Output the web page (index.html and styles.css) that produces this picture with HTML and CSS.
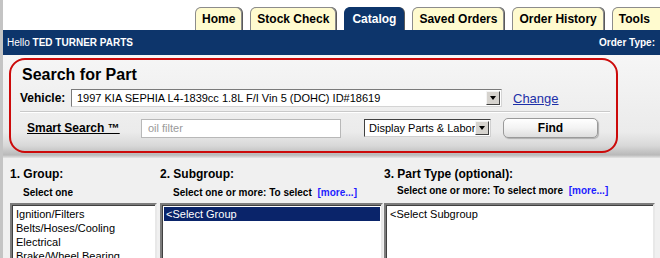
FILE: index.html
```html
<!DOCTYPE html>
<html lang="en">

<head>
    <meta charset="UTF-8">
    <title>Catalog - Search for Part</title>
    <link rel="stylesheet" href="styles.css">
</head>

<body>
    <div class="page">
        <div class="tabs">
            <a class="tab">Home</a>
            <a class="tab">Stock Check</a>
            <a class="tab active">Catalog</a>
            <a class="tab">Saved Orders</a>
            <a class="tab">Order History</a>
            <a class="tab last">Tools</a>
        </div>

        <div class="userbar">
            <span>Hello <b>TED TURNER PARTS</b></span>
            <b>Order Type:</b>
        </div>

        <div class="search-area">
            <div class="search-box">
                <h1 class="search-title">Search for Part</h1>
                <div class="vehicle-row">
                    <span class="label">Vehicle:</span>
                    <div class="combo vehicle-combo">
                        <span class="combo-text">1997 KIA SEPHIA L4-1839cc 1.8L F/I Vin 5 (DOHC) ID#18619</span>
                        <span class="combo-btn"></span>
                    </div>
                    <a class="change-link">Change</a>
                </div>
                <div class="smart-row">
                    <a class="smart-link">Smart Search ™</a>
                    <div class="text-input">oil filter</div>
                    <div class="combo display-combo">
                        <span class="combo-text">Display Parts &amp; Labor</span>
                        <span class="combo-btn"></span>
                    </div>
                    <button class="find-btn">Find</button>
                </div>
            </div>
        </div>

        <div class="picker">
            <div class="col col-group">
                <div class="col-title">1. Group:</div>
                <div class="col-sub">Select one</div>
                <div class="listbox">
                    <div class="opt">Ignition/Filters</div>
                    <div class="opt">Belts/Hoses/Cooling</div>
                    <div class="opt">Electrical</div>
                    <div class="opt">Brake/Wheel Bearing</div>
                </div>
            </div>
            <div class="col col-subgroup">
                <div class="col-title">2. Subgroup:</div>
                <div class="col-sub">Select one or more: To select <a class="more">[more...]</a></div>
                <div class="listbox">
                    <div class="opt selected">&lt;Select Group</div>
                </div>
            </div>
            <div class="col col-type">
                <div class="col-title">3. Part Type (optional):</div>
                <div class="col-sub">Select one or more: To select more <a class="more">[more...]</a></div>
                <div class="listbox">
                    <div class="opt">&lt;Select Subgroup</div>
                </div>
            </div>
        </div>
    </div>
</body>

</html>
```

FILE: styles.css
```css
html,
body {
    margin: 0;
    height: 100%;
    overflow: hidden;
    background-color: #fff;
    font-family: "Liberation Sans", Arial, sans-serif;
}

.page {
    height: 258px;
    border-left: 3px solid #c4c4c4;
    background-color: #f0f0f0;
}

/* top tabs */
.tabs {
    display: flex;
    align-items: flex-end;
    gap: 8px;
    height: 30px;
    padding-left: 192px;
    background-color: #fff;
    white-space: nowrap;
    overflow: hidden;
}

.tab {
    flex-shrink: 0;
    height: 22px;
    line-height: 22px;
    padding: 0 6px;
    background-color: #fffbcf;
    border: 1px solid #8c8c8c;
    border-bottom: none;
    border-radius: 6px 6px 0 0;
    box-shadow: 1px 0 0 #5a5a5a;
    font-size: 12px;
    font-weight: bold;
    color: #000;
}

.tab.active {
    background-color: #0d356b;
    border-color: #0d356b;
    color: #fff;
    padding: 0 7px;
}

.tab.last {
    padding-right: 20px;
}

/* navy bar */
.userbar {
    display: flex;
    justify-content: space-between;
    align-items: center;
    height: 25px;
    padding: 0 5px 0 4px;
    background-color: #0d356b;
    color: #fff;
    font-size: 10px;
}

/* search area */
.search-area {
    height: 103px;
    padding: 3px 0 0 6px;
    box-sizing: border-box;
    background: linear-gradient(to bottom, #f6f6f6 0, #ebebeb 75%, #d8d8d8 88%, #b9b9b9 97%, #e4e4e4 100%);
}

.search-box {
    width: 609px;
    height: 95px;
    box-sizing: border-box;
    border: 2px solid #cc0a0a;
    border-radius: 16px;
    padding: 5px 0 0 11px;
}

.search-title {
    margin: 0;
    font-size: 16px;
    line-height: 20px;
    font-weight: bold;
    color: #000;
}

.vehicle-row {
    display: flex;
    align-items: center;
    height: 22px;
    margin: 2px 6px 0 -2px;
    padding-bottom: 2px;
    border-bottom: 1px solid #c9c9c9;
    box-shadow: 0 1px 0 #fff;
}

.label {
    font-size: 12px;
    font-weight: bold;
    width: 51px;
}

.combo {
    display: flex;
    align-items: center;
    height: 18px;
    box-sizing: border-box;
    background-color: #fff;
    border: 1px solid #7a7a7a;
    border-right-color: #d4d4d4;
    border-bottom-color: #d4d4d4;
    font-size: 11px;
    padding: 1px;
}

.combo-text {
    flex: 1;
    padding-left: 4px;
    white-space: nowrap;
    overflow: hidden;
}

.combo-btn {
    position: relative;
    width: 14px;
    height: 14px;
    box-sizing: border-box;
    background-color: #d6d3ce;
    border: 1px solid;
    border-color: #f4f4f4 #404040 #404040 #f4f4f4;
}

.combo-btn::after {
    content: "";
    position: absolute;
    left: 3px;
    top: 4px;
    border-left: 3px solid transparent;
    border-right: 3px solid transparent;
    border-top: 4px solid #000;
}

.vehicle-combo {
    width: 431px;
}

.change-link {
    margin-left: 11px;
    font-size: 13px;
    color: #1c2fa8;
    text-decoration: underline;
}

.smart-row {
    display: flex;
    align-items: center;
    height: 20px;
    margin-top: 6px;
}

.smart-link {
    width: 114px;
    padding-left: 5px;
    font-size: 12px;
    font-weight: bold;
    color: #000;
    text-decoration: underline;
}

.text-input {
    width: 200px;
    height: 19px;
    box-sizing: border-box;
    border: 1px solid #b8b8b8;
    background-color: #fff;
    color: #9a9a9a;
    font-size: 11px;
    line-height: 17px;
    padding-left: 6px;
}

.display-combo {
    width: 127px;
    margin-left: 23px;
    border: 1px solid #404040;
    border-right-color: #d0d0d0;
    border-bottom-color: #d0d0d0;
}

.display-combo .combo-text {
    padding-left: 3px;
}

.find-btn {
    width: 95px;
    height: 20px;
    margin-left: 12px;
    border: 1px solid #9a9a9a;
    border-radius: 5px;
    background: linear-gradient(to bottom, #fff 0, #f3f3f3 50%, #dedede 100%);
    box-shadow: 1px 1px 1px #b0b0b0;
    font-family: "Liberation Sans", Arial, sans-serif;
    font-size: 12px;
    font-weight: bold;
    color: #000;
    padding: 0;
}

/* group / subgroup / part type */
.picker {
    display: flex;
    padding: 9px 0 0 7px;
    background-color: #f0f0f0;
}

.col-title {
    font-size: 12px;
    font-weight: bold;
    line-height: 15px;
}

.col-sub {
    font-size: 10px;
    font-weight: bold;
    line-height: 14px;
    margin: 4px 0 0 13px;
    height: 17px;
    white-space: nowrap;
}

.more {
    color: #1d1dff;
    margin-left: 3px;
}

.col-group {
    width: 150px;
}

.col-subgroup {
    width: 224px;
}

.col-type {
    width: 271px;
}

.col-type .col-sub {
    margin-top: 2px;
    height: 19px;
}

.listbox {
    height: 60px;
    box-sizing: border-box;
    background-color: #fff;
    border: 2px solid;
    border-color: #7c7c7c #e8e8e8 #e8e8e8 #7c7c7c;
    box-shadow: inset 1px 1px 0 #404040;
    padding: 2px 1px 0 2px;
}

.col-group .listbox {
    width: 147px;
}

.col-subgroup .listbox {
    width: 223px;
}

.opt {
    font-size: 11px;
    line-height: 14px;
    padding-left: 2px;
    white-space: nowrap;
}

.opt.selected {
    background-color: #0a246a;
    color: #fff;
}
```
